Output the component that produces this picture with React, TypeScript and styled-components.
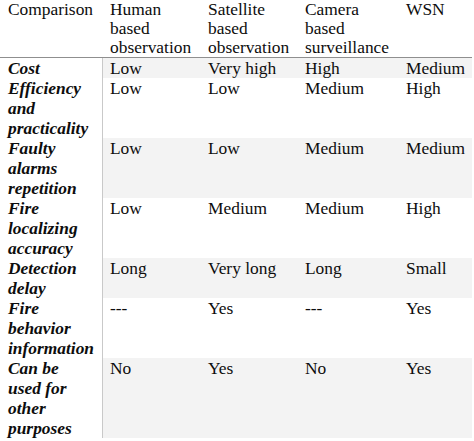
import * as React from 'react'
import styled, { createGlobalStyle } from 'styled-components'

const Global = createGlobalStyle`
  body {
    margin: 0;
    background: #ffffff;
  }
`

const serif = "'Liberation Serif', 'Times New Roman', serif"

const Table = styled.div`
  display: grid;
  grid-template-columns: 103px 98px 97px 101px 73px;
  width: 472px;
  font-family: ${serif};
  font-size: 17.4px;
  line-height: 20px;
  color: #0d0d0d;
`

const HeadCell = styled.div<{ $first?: boolean }>`
  padding-left: ${p => p.$first ? 8 : 7}px;
  line-height: 19px;
  border-bottom: 1px solid #8f8f8f;
  white-space: nowrap;
`

const LabelCell = styled.div`
  padding-left: 8px;
  font-weight: bold;
  font-style: italic;
  border-right: 1px solid #c9c9c9;
`

const Cell = styled.div<{ $shade: boolean }>`
  padding-left: 7px;
  white-space: nowrap;
  background: ${p => p.$shade ? '#f3f3f3' : '#ffffff'};
`

const header = ['Comparison', 'Human based observation', 'Satellite based observation', 'Camera based surveillance', 'WSN']

const rows: { label: string[], values: string[] }[] = [
  { label: ['Cost'], values: ['Low', 'Very high', 'High', 'Medium'] },
  { label: ['Efficiency', 'and', 'practicality'], values: ['Low', 'Low', 'Medium', 'High'] },
  { label: ['Faulty', 'alarms', 'repetition'], values: ['Low', 'Low', 'Medium', 'Medium'] },
  { label: ['Fire', 'localizing', 'accuracy'], values: ['Low', 'Medium', 'Medium', 'High'] },
  { label: ['Detection', 'delay'], values: ['Long', 'Very long', 'Long', 'Small'] },
  { label: ['Fire', 'behavior', 'information'], values: ['---', 'Yes', '---', 'Yes'] },
  { label: ['Can be', 'used for', 'other', 'purposes'], values: ['No', 'Yes', 'No', 'Yes'] },
]

// header titles break after each word, except the one-word ones
const headLines = (text: string, i: number) => {
  if (i === 0 || i === 4) return [text]
  const parts = text.split(' ')
  return [parts[0], parts[1], parts.slice(2).join(' ')]
}

export default function App() {
  return (
    <>
      <Global />
      <Table>
        { header.map((h, i) => (
          <HeadCell key={ h } $first={ i === 0 }>
            { headLines(h, i).map((l, j) => <div key={ j }>{ l }</div>) }
          </HeadCell>
        )) }
        { rows.map((r, ri) => (
          <React.Fragment key={ ri }>
            <LabelCell>
              { r.label.map((l, j) => <div key={ j }>{ l }</div>) }
            </LabelCell>
            { r.values.map((v, vi) => <Cell key={ vi } $shade={ ri % 2 === 0 }>{ v }</Cell>) }
          </React.Fragment>
        )) }
      </Table>
    </>
  )
}
